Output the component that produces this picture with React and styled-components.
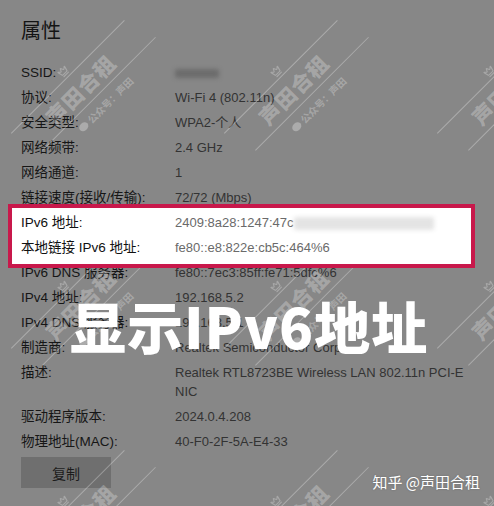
import React from "react";
import styled, { createGlobalStyle } from "styled-components";
import { Crown } from "lucide-react";

const GlobalStyle = createGlobalStyle`
  html, body {
    margin: 0;
    padding: 0;
    background: #878787;
  }
  body {
    font-family: "Liberation Sans", "Noto Sans CJK SC", sans-serif;
  }
`;

const Page = styled.div`
  position: relative;
  width: 494px;
  height: 506px;
  overflow: hidden;
  background: #878787;
  padding: 16px 21px 0 21px;
  box-sizing: border-box;
`;

const Title = styled.h2`
  margin: 0 0 16px 0;
  font-size: 20px;
  line-height: 28px;
  font-weight: 400;
  color: #141414;
  font-family: "Noto Sans CJK SC", sans-serif;
`;

const List = styled.div`
  display: flex;
  flex-direction: column;
`;

const Row = styled.div`
  display: grid;
  grid-template-columns: 154px 300px;
  min-height: 25px;
  padding: 3px 0;
  box-sizing: border-box;
  font-family: "Liberation Sans", "Noto Sans CJK SC", sans-serif;
  font-size: 13px;
  line-height: 19px;
`;

const Label = styled.span`
  color: ${(p) => (p.$light ? "#111" : "#161616")};
  font-size: 13.5px;
  white-space: nowrap;
`;

const Value = styled.span`
  color: ${(p) => (p.$light ? "#6a6a6a" : "#333")};
`;

const Highlight = styled.div`
  position: relative;
  z-index: 3;
  margin: -6px -2px -8px -13px;
  padding: 2px 0 4px 9px;
  border: 4px solid #c8184b;
  background: #fff;
  display: flex;
  flex-direction: column;
`;

const Smudge = styled.span`
  display: inline-block;
  vertical-align: middle;
  width: ${(p) => p.$w}px;
  height: ${(p) => p.$h}px;
  background: ${(p) => p.$c};
  filter: blur(2px);
  border-radius: 2px;
`;

const CopyButton = styled.button`
  margin-top: 3px;
  width: 90px;
  height: 31px;
  border: none;
  background: #6f6f6f;
  color: #1c1c1c;
  font-family: "Noto Sans CJK SC", sans-serif;
  font-size: 14px;
  padding: 0;
`;

const BigCaption = styled.div`
  position: absolute;
  z-index: 5;
  left: 70px;
  top: 297px;
  font-family: "Noto Sans CJK SC", sans-serif;
  font-weight: 900;
  font-size: 56px;
  letter-spacing: 1px;
  line-height: 1;
  color: #fff;
  white-space: nowrap;
`;

const Credit = styled.div`
  position: absolute;
  z-index: 5;
  right: 14px;
  bottom: 14px;
  font-family: "Noto Sans CJK SC", sans-serif;
  font-size: 15px;
  color: #fff;
  text-shadow: 0 0 2px rgba(0, 0, 0, 0.25);
`;

const Mark = styled.div`
  position: absolute;
  z-index: 2;
  width: 170px;
  transform: translate(-50%, -50%) rotate(-45deg);
  display: flex;
  flex-direction: column;
  align-items: center;
  color: rgba(255, 255, 255, 0.27);
  pointer-events: none;
`;

const MarkLine = styled.div`
  width: 160px;
  height: 1px;
  background: rgba(255, 255, 255, 0.3);
  margin-left: ${(p) => p.$shift || 0}px;
`;

const MarkTitle = styled.div`
  font-family: "Noto Sans CJK SC", sans-serif;
  font-weight: 900;
  font-size: 21px;
  line-height: 22px;
  letter-spacing: 1px;
  margin: 6px 0 5px;
`;

const MarkSub = styled.div`
  display: flex;
  align-items: center;
  gap: 3px;
  margin: 6px 0 0 14px;
  font-family: "Noto Sans CJK SC", sans-serif;
  font-weight: 700;
  font-size: 10px;
  line-height: 12px;
`;

const Bubble = styled.span`
  width: 10px;
  height: 8px;
  border-radius: 50%;
  background: rgba(255, 255, 255, 0.3);
`;

const Watermark = ({ x, y }) => (
  <Mark style={{ left: x, top: y + 8 }}>
    <Crown size={11} strokeWidth={2.5} style={{ marginBottom: 1 }} />
    <MarkLine />
    <MarkTitle>声田合租</MarkTitle>
    <MarkLine $shift={20} />
    <MarkSub>
      <Bubble />
      公众号：声田
    </MarkSub>
  </Mark>
);

const rows = [
  ["SSID:", <Smudge $w={44} $h={9} $c="#6c6c6c" />],
  ["协议:", "Wi-Fi 4 (802.11n)"],
  ["安全类型:", "WPA2-个人"],
  ["网络频带:", "2.4 GHz"],
  ["网络通道:", "1"],
  ["链接速度(接收/传输):", "72/72 (Mbps)"],
];

const rowsAfter = [
  ["IPv6 DNS 服务器:", "fe80::7ec3:85ff:fe71:5dfc%6"],
  ["IPv4 地址:", "192.168.5.2"],
  ["IPv4 DNS 服务器:", "192.168.5.1"],
  ["制造商:", "Realtek Semiconductor Corp."],
  ["描述:", "Realtek RTL8723BE Wireless LAN 802.11n PCI-E NIC"],
  ["驱动程序版本:", "2024.0.4.208"],
  ["物理地址(MAC):", "40-F0-2F-5A-E4-33"],
];

const marks = [];
[83, 298, 513].forEach((y) => {
  [82, 295, 508].forEach((x) => marks.push({ x, y }));
});

export default function App() {
  return (
    <>
      <GlobalStyle />
      <Page>
        <Title>属性</Title>
        <List>
          {rows.map(([l, v], i) => (
            <Row key={i}>
              <Label>{l}</Label>
              <Value>{v}</Value>
            </Row>
          ))}
          <Highlight>
            <Row>
              <Label $light>IPv6 地址:</Label>
              <Value $light>
                2409:8a28:1247:47c
                <Smudge $w={140} $h={13} $c="#e4e4e4" />
              </Value>
            </Row>
            <Row>
              <Label $light>本地链接 IPv6 地址:</Label>
              <Value $light>fe80::e8:822e:cb5c:464%6</Value>
            </Row>
          </Highlight>
          {rowsAfter.map(([l, v], i) => (
            <Row key={i}>
              <Label>{l}</Label>
              <Value>{v}</Value>
            </Row>
          ))}
        </List>
        <CopyButton>复制</CopyButton>
        {marks.map((m, i) => (
          <Watermark key={i} x={m.x} y={m.y} />
        ))}
        <BigCaption>显示IPv6地址</BigCaption>
        <Credit>知乎 @声田合租</Credit>
      </Page>
    </>
  );
}
